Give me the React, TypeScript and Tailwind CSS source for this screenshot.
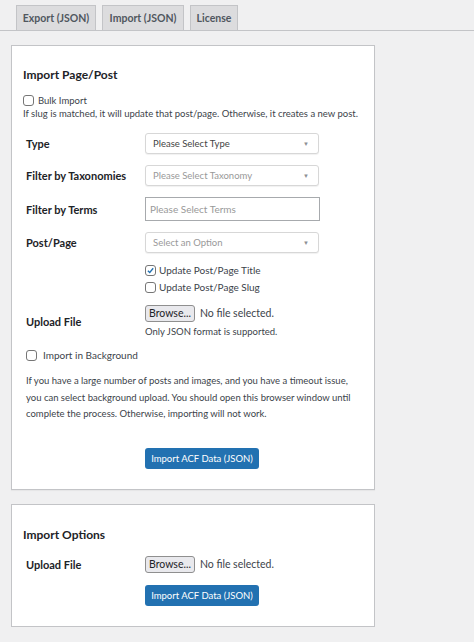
import React from "react";

const font = { fontFamily: 'Lato, "Noto Sans", sans-serif' };

function Caret() {
  return <span className="text-[6px] leading-none text-[#8c8f94]">▼</span>;
}

function Select({ text, muted }: { text: string; muted?: boolean }) {
  return (
    <div className="flex h-[21px] w-[174px] items-center justify-between rounded-[3px] border border-[#d7d7d7] bg-white pl-[7px] pr-[9px] shadow-[0_1px_1px_rgba(0,0,0,0.06)]">
      <span className={"text-[9.5px] " + (muted ? "text-[#999]" : "text-[#444]")}>{text}</span>
      <Caret />
    </div>
  );
}

function Check({ checked }: { checked?: boolean }) {
  return (
    <span className="flex h-[11px] w-[11px] shrink-0 items-center justify-center rounded-[3px] border border-[#767676] bg-white">
      {checked && (
        <svg viewBox="0 0 12 12" className="h-[11px] w-[11px]">
          <path d="M2.5 6.2 L5 8.6 L9.6 3" fill="none" stroke="#2271b1" strokeWidth="1.8" />
        </svg>
      )}
    </span>
  );
}

function FileInput() {
  return (
    <div className="flex items-center gap-[5px] whitespace-nowrap">
      <span className="flex h-[17px] items-center rounded-[3px] border border-[#8f8f8f] bg-[#e9e9ed] px-[3px] text-[10.5px] text-[#1d2327]">
        Browse...
      </span>
      <span className="text-[10.5px] text-[#3c434a]">No file selected.</span>
    </div>
  );
}

function Row({ label, children, className }: { label: string; children: React.ReactNode; className?: string }) {
  return (
    <div className={"flex items-center " + (className ?? "")}>
      <div className="w-[122px] pl-[3px] text-[11px] font-bold text-[#1d2327]">{label}</div>
      {children}
    </div>
  );
}

function Button() {
  return (
    <span className="inline-flex h-[21px] w-[114px] items-center justify-center whitespace-nowrap rounded-[3px] bg-[#2271b1] text-[9.5px] text-white">
      Import ACF Data (JSON)
    </span>
  );
}

export default function App() {
  return (
    <div className="min-h-[642px] w-[474px] bg-[#f0f0f1] text-[9.5px] leading-[13px] text-[#3c434a]" style={font}>
      <div className="flex items-end gap-[6px] border-b border-[#c3c4c7] pl-[16px] pt-[5px]">
        {[
          ["Export (JSON)", "w-[80px]"],
          ["Import (JSON)", "w-[82px]"],
          ["License", "w-[48px]"],
        ].map(([t, w]) => (
          <div
            key={t}
            className={
              "-mb-px flex h-[26px] items-center justify-center border border-[#c3c4c7] bg-[#dcdcde] text-[10.5px] font-bold text-[#50575e] " +
              w
            }
          >
            {t}
          </div>
        ))}
      </div>

      <div className="ml-[11px] mt-[14px] w-[364px] border border-[#c3c4c7] bg-white px-[11px] pb-[20px] pt-[20px] shadow-[0_1px_1px_rgba(0,0,0,0.04)]">
        <h2 className="text-[12px] font-bold leading-[17px] text-[#1d2327]">Import Page/Post</h2>
        <label className="mt-[11px] flex items-center gap-[4px]">
          <Check />
          <span>Bulk Import</span>
        </label>
        <p className="mt-[0px] whitespace-nowrap">If slug is matched, it will update that post/page. Otherwise, it creates a new post.</p>

        <div className="mt-[13px] flex flex-col gap-[11px]">
          <Row label="Type">
            <Select text="Please Select Type" />
          </Row>
          <Row label="Filter by Taxonomies">
            <Select text="Please Select Taxonomy" muted />
          </Row>
          <Row label="Filter by Terms">
            <div className="flex h-[24px] w-[175px] items-center border border-[#a7aaad] bg-white pl-[4px] text-[10px] text-[#999]">
              Please Select Terms
            </div>
          </Row>
          <Row label="Post/Page">
            <Select text="Select an Option" muted />
          </Row>
        </div>

        <div className="ml-[122px] mt-[11px] flex flex-col gap-[4px] text-[10px]">
          <label className="flex items-center gap-[3px]">
            <Check checked />
            <span>Update Post/Page Title</span>
          </label>
          <label className="flex items-center gap-[3px]">
            <Check />
            <span>Update Post/Page Slug</span>
          </label>
        </div>

        <Row label="Upload File" className="mt-[11px]">
          <div className="flex flex-col gap-[3px]">
            <FileInput />
            <span>Only JSON format is supported.</span>
          </div>
        </Row>

        <label className="ml-[3px] mt-[11px] flex items-center gap-[6px]">
          <Check />
          <span className="text-[10px]">Import in Background</span>
        </label>

        <p className="ml-[3px] mt-[11px] leading-[16.5px]">
          If you have a large number of posts and images, and you have a timeout issue,
          <br />
          you can select background upload. You should open this browser window until
          <br />
          complete the process. Otherwise, importing will not work.
        </p>

        <div className="ml-[122px] mt-[25px]">
          <Button />
        </div>
      </div>

      <div className="ml-[11px] mt-[14px] w-[364px] border border-[#c3c4c7] bg-white px-[11px] pb-[20px] pt-[21px]">
        <h2 className="text-[12px] font-bold leading-[17px] text-[#1d2327]">Import Options</h2>
        <Row label="Upload File" className="mt-[13px]">
          <FileInput />
        </Row>
        <div className="ml-[122px] mt-[12px]">
          <Button />
        </div>
      </div>
    </div>
  );
}
